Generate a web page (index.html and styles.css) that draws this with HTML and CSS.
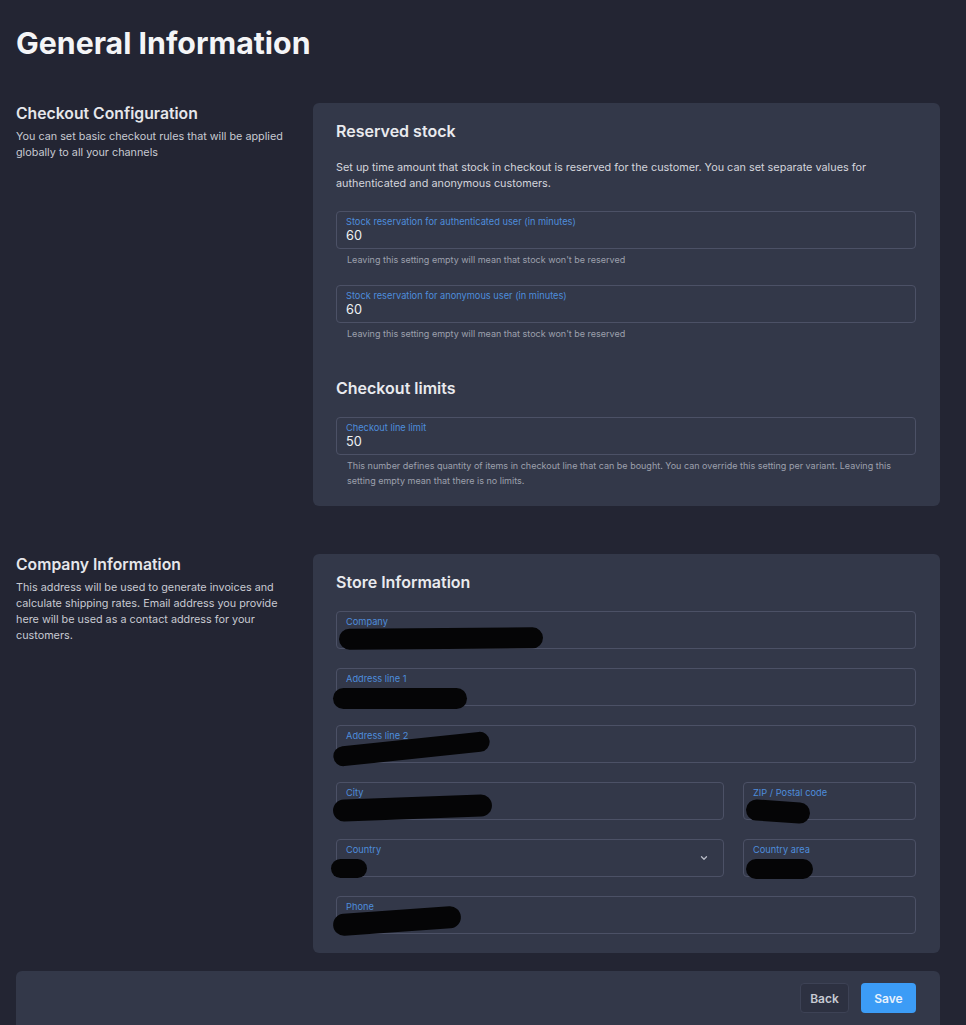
FILE: index.html
```html
<!DOCTYPE html>
<html lang="en">
<head>
<meta charset="utf-8">
<title>General Information</title>
<link rel="stylesheet" href="styles.css">
</head>
<body>
<div class="page">
  <h1 class="title">General Information</h1>

  <section class="section sec-checkout">
    <div class="about">
      <h2 class="about-title">Checkout Configuration</h2>
      <p class="about-text">You can set basic checkout rules that will be applied globally to all your channels</p>
    </div>
    <div class="card">
      <h3 class="card-title">Reserved stock</h3>
      <p class="card-text">Set up time amount that stock in checkout is reserved for the customer. You can set separate values for authenticated and anonymous customers.</p>
      <div class="field-group first">
        <div class="field">
          <span class="label">Stock reservation for authenticated user (in minutes)</span>
          <span class="value">60</span>
        </div>
        <p class="helper">Leaving this setting empty will mean that stock won't be reserved</p>
      </div>
      <div class="field-group">
        <div class="field">
          <span class="label">Stock reservation for anonymous user (in minutes)</span>
          <span class="value">60</span>
        </div>
        <p class="helper">Leaving this setting empty will mean that stock won't be reserved</p>
      </div>
      <h3 class="card-title second">Checkout limits</h3>
      <div class="field-group limits">
        <div class="field">
          <span class="label">Checkout line limit</span>
          <span class="value">50</span>
        </div>
        <p class="helper">This number defines quantity of items in checkout line that can be bought. You can override this setting per variant. Leaving this setting empty mean that there is no limits.</p>
      </div>
    </div>
  </section>

  <section class="section sec-company">
    <div class="about">
      <h2 class="about-title">Company Information</h2>
      <p class="about-text">This address will be used to generate invoices and calculate shipping rates. Email address you provide here will be used as a contact address for your customers.</p>
    </div>
    <div class="card card-store">
      <h3 class="card-title">Store Information</h3>
      <div class="fields">
        <div class="field">
          <span class="label">Company</span>
          <span class="value">&nbsp;</span>
          <span class="redact r-company"></span>
        </div>
        <div class="field">
          <span class="label">Address line 1</span>
          <span class="value">&nbsp;</span>
          <span class="redact r-addr1"></span>
        </div>
        <div class="field">
          <span class="label">Address line 2</span>
          <span class="value">&nbsp;</span>
          <span class="redact r-addr2"></span>
        </div>
        <div class="row">
          <div class="field">
            <span class="label">City</span>
            <span class="value">&nbsp;</span>
            <span class="redact r-city"></span>
          </div>
          <div class="field">
            <span class="label">ZIP / Postal code</span>
            <span class="value">&nbsp;</span>
            <span class="redact r-zip"></span>
          </div>
        </div>
        <div class="row">
          <div class="field select">
            <span class="label">Country</span>
            <span class="value">&nbsp;</span>
            <span class="redact r-country"></span>
            <svg class="chevron" width="10" height="10" viewBox="0 0 10 10"><path d="M2.5 3.8 5 6.3 7.5 3.8" fill="none" stroke="#b8bbc6" stroke-width="1.3" stroke-linecap="round" stroke-linejoin="round"/></svg>
          </div>
          <div class="field">
            <span class="label">Country area</span>
            <span class="value">&nbsp;</span>
            <span class="redact r-area"></span>
          </div>
        </div>
        <div class="field">
          <span class="label">Phone</span>
          <span class="value">&nbsp;</span>
          <span class="redact r-phone"></span>
        </div>
      </div>
    </div>
  </section>

  <footer class="savebar">
    <button class="btn btn-back" type="button">Back</button>
    <button class="btn btn-save" type="button">Save</button>
  </footer>
</div>
</body>
</html>
```

FILE: styles.css
```css
* { box-sizing: border-box; }

html, body {
  margin: 0;
  padding: 0;
  background: #232533;
}

body {
  font-family: Inter, "Noto Sans", "Liberation Sans", sans-serif;
  color: #e4e5ea;
}

.page {
  width: 924px;
  margin-left: 16px;
  padding-top: 25px;
}

.title {
  margin: 0;
  font-size: 30.3px;
  line-height: 36px;
  font-weight: 700;
  color: #f4f5f7;
}

.section {
  display: grid;
  grid-template-columns: 274px 1fr;
  column-gap: 23px;
  align-items: start;
}

.sec-checkout { margin-top: 42px; }
.sec-company { margin-top: 48px; }

.about-title {
  margin: 1px 0 0;
  font-size: 15.75px;
  line-height: 20px;
  font-weight: 600;
  color: #e6e7eb;
}

.about-text {
  margin: 5px 0 0;
  font-size: 10.8px;
  line-height: 16px;
  color: #c8cad2;
}

.card {
  background: #333849;
  border-radius: 6px;
  padding: 17px 24px 18px 23px;
}

.card-store { padding-bottom: 19px; }

.card-title {
  margin: 0;
  font-size: 16px;
  line-height: 22px;
  font-weight: 600;
  color: #e9eaee;
}

.card-title.second { margin-top: 36px; }

.card-text {
  margin: 17px 0 0;
  font-size: 10.85px;
  line-height: 16px;
  color: #d3d5dc;
}

.field-group { margin-top: 20px; }
.field-group + .field-group { margin-top: 18px; }
.field-group.limits { margin-top: 18px; }

.field {
  position: relative;
  height: 38px;
  border: 1px solid #4c5166;
  border-radius: 4px;
  padding: 4px 9px 0;
  display: flex;
  flex-direction: column;
}

.label {
  font-size: 9.25px;
  line-height: 11px;
  color: #4e8ddc;
  white-space: nowrap;
}

.value {
  font-size: 12.75px;
  line-height: 17px;
  color: #eef0f3;
}

.helper {
  margin: 3px 0 0;
  padding: 0 11px;
  font-size: 9px;
  line-height: 15px;
  color: #9da0ad;
}

.fields {
  margin-top: 18px;
  display: flex;
  flex-direction: column;
  gap: 19px;
}

.row {
  display: grid;
  grid-template-columns: 1fr 173px;
  column-gap: 19px;
}

.chevron {
  position: absolute;
  right: 14px;
  top: 13px;
}

.redact {
  position: absolute;
  background: #050506;
  border-radius: 12px;
}

.r-company { left: 2px; top: 16px; width: 204px; height: 21px; transform: rotate(-0.4deg); }
.r-addr1 { left: -4px; top: 19px; width: 134px; height: 21px; }
.r-addr2 { left: -4px; top: 13px; width: 157px; height: 20px; transform: rotate(-6deg); border-radius: 14px; }
.r-city { left: -4px; top: 14px; width: 159px; height: 22px; transform: rotate(-2deg); }
.r-zip { left: 2px; top: 18px; width: 64px; height: 21px; transform: rotate(4deg); }
.r-country { left: -6px; top: 19px; width: 36px; height: 19px; }
.r-area { left: 2px; top: 19px; width: 67px; height: 20px; }
.r-phone { left: -4px; top: 13px; width: 128px; height: 22px; transform: rotate(-4deg); }

.savebar {
  margin-top: 18px;
  background: #333849;
  border-radius: 6px 6px 0 0;
  padding: 12px 24px 12px 0;
  display: flex;
  justify-content: flex-end;
  gap: 12px;
}

.btn {
  font-family: inherit;
  height: 30px;
  border-radius: 4px;
  font-size: 12px;
  font-weight: 600;
  cursor: pointer;
}

.btn-back {
  width: 49px;
  background: #2d3141;
  border: 1px solid #3d4255;
  color: #c7cad3;
}

.btn-save {
  width: 55px;
  background: #3c9cf6;
  border: none;
  color: #e8f2fd;
}
```
